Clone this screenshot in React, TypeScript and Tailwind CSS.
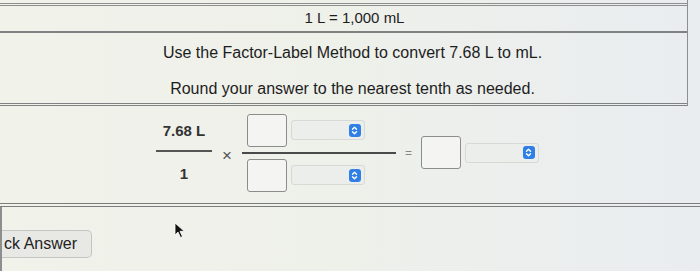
import React from "react";

function Spinner() {
  return (
    <span className="flex h-[13px] w-[12px] items-center justify-center rounded-[3px] bg-[#2f7fe6]">
      <svg width="7" height="9" viewBox="0 0 7 9" fill="none" stroke="white" strokeWidth="1.4" strokeLinecap="round" strokeLinejoin="round">
        <path d="M1.5 3.3 3.5 1.3 5.5 3.3" />
        <path d="M1.5 5.7 3.5 7.7 5.5 5.7" />
      </svg>
    </span>
  );
}

function Entry() {
  return (
    <div className="flex items-center gap-[4px]">
      <div className="h-[33px] w-[40px] rounded-[3px] border border-[#8a8d8c] bg-[#f4f5f3]" />
      <div className="flex h-[20px] w-[74px] items-center justify-end rounded-[3px] border border-[#d6d9d5] bg-[#eceeeb] pr-[3px]">
        <Spinner />
      </div>
    </div>
  );
}

export default function App() {
  return (
    <div
      className="relative h-[271px] w-[700px] overflow-hidden bg-gradient-to-r from-[#f1f2ea] via-[#eef0ea] to-[#e9edf0] text-[#1d1d1d]"
      style={{ fontFamily: '"Liberation Sans", Arial, sans-serif' }}
    >
      <div className="flex h-[203px] flex-col">
        <div className="mr-[12px] flex h-[106px] flex-col border-r border-[#8d8f8e]">
          <div className="h-[6px] border-b-[3px] border-double border-[#8d8f8e]" />
          <div className="flex h-[27px] items-center justify-center border-b-2 border-[#7f8281] pl-[22px] text-[15px]">
            1 L = 1,000 mL
          </div>
          <div className="flex flex-1 flex-col items-center justify-center gap-[12px] border-b-[3px] border-double border-[#7f8281] pt-[6px] pl-[18px] text-[16px]">
            <p>Use the Factor-Label Method to convert 7.68 L to mL.</p>
            <p>Round your answer to the nearest tenth as needed.</p>
          </div>
        </div>
        <div className="flex flex-1 items-center pl-[156px] pb-[4px]">
          <div className="flex w-[56px] flex-col items-center text-[15px] text-[#333]">
            <span className="mb-[8px] font-semibold">7.68 L</span>
            <span className="h-[2px] w-full bg-[#555]" />
            <span className="mt-[11px] font-semibold">1</span>
          </div>
          <span className="mx-[10px] mt-[6px] text-[17px] text-[#555]">×</span>
          <div className="flex w-[154px] flex-col items-start">
            <div className="ml-[5px]"><Entry /></div>
            <span className="my-[5px] h-[2px] w-full bg-[#4a4a4a]" />
            <div className="ml-[5px]"><Entry /></div>
          </div>
          <span className="mx-[9px] text-[12px] text-[#888]">=</span>
          <Entry />
        </div>
      </div>
      <div className="h-[4px] w-full border-y border-[#7b7e7d]" />
      <div className="h-[64px] border-l-2 border-[#8d8f8e] pt-[23px]">
        <div className="flex h-[28px] w-[90px] items-center justify-end rounded-r-[5px] border border-l-0 border-[#c3c5c2] bg-[#e8e9e5] pr-[14px] text-[16px] text-[#222]">
          ck Answer
        </div>
      </div>
      <svg className="absolute left-[174px] top-[222px]" width="12" height="17" viewBox="0 0 12 17">
        <path d="M1 1 1 13 4 10 6.5 15.5 8.5 14.6 6 9.3 10.3 9.3Z" fill="#111" stroke="#fff" strokeWidth="0.8" />
      </svg>
    </div>
  );
}
